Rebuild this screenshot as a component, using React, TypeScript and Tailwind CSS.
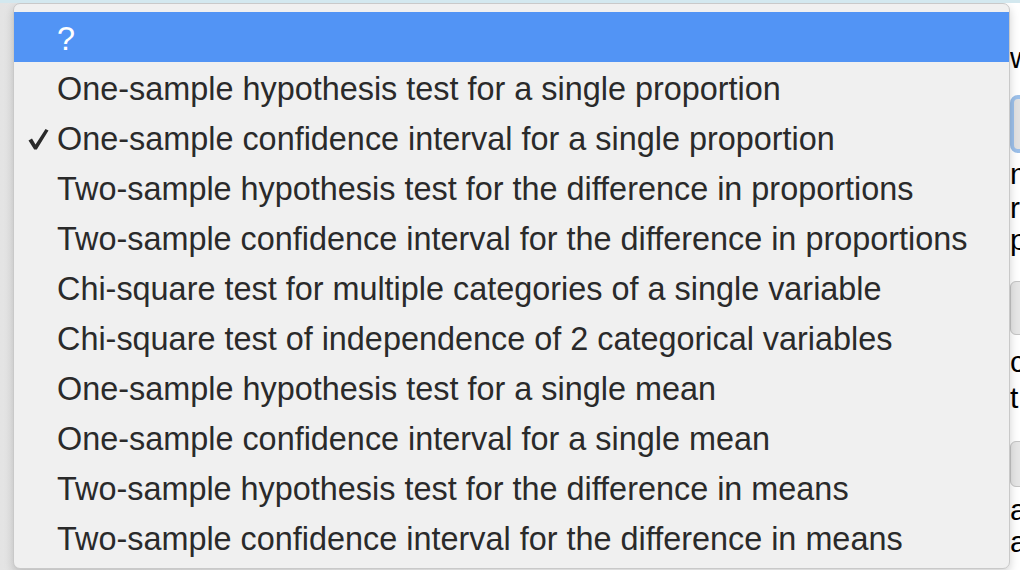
import { useState } from "react";

const options = [
  "?",
  "One-sample hypothesis test for a single proportion",
  "One-sample confidence interval for a single proportion",
  "Two-sample hypothesis test for the difference in proportions",
  "Two-sample confidence interval for the difference in proportions",
  "Chi-square test for multiple categories of a single variable",
  "Chi-square test of independence of 2 categorical variables",
  "One-sample hypothesis test for a single mean",
  "One-sample confidence interval for a single mean",
  "Two-sample hypothesis test for the difference in means",
  "Two-sample confidence interval for the difference in means",
];

const Check = () => (
  <svg width="22" height="24" viewBox="0 0 22 24" className="ml-[6px] mt-[3px]">
    <path d="M1.5 13.5 L5 11.5 L8.5 17.5 L18.5 2 L21.5 3.5 L9.8 22.5 L7.2 22.5 Z" fill="currentColor" />
  </svg>
);

const Backdrop = () => (
  <div className="flex w-[10px] flex-col overflow-hidden text-[30px] leading-none text-black">
    <div className="mt-[40px] h-[26px] whitespace-nowrap">w</div>
    <div className="mt-[26px] h-[58px] w-[40px] rounded-[8px] border-[4px] border-[#9cc0ea] bg-[#e2e2e2]" />
    <div className="mt-[6px] h-[26px] whitespace-nowrap">n</div>
    <div className="mt-[8px] h-[26px] whitespace-nowrap">r</div>
    <div className="mt-[6px] h-[26px] whitespace-nowrap">pl</div>
    <div className="mt-[30px] h-[54px] w-[40px] rounded-[6px] border border-[#c4c4c4] bg-[#e6e6e6]" />
    <div className="mt-[12px] h-[26px] whitespace-nowrap">c</div>
    <div className="mt-[10px] h-[26px] whitespace-nowrap">t</div>
    <div className="mt-[32px] h-[46px] w-[40px] rounded-[6px] border border-[#c4c4c4] bg-[#e6e6e6]" />
    <div className="mt-[8px] h-[26px] whitespace-nowrap">a</div>
    <div className="mt-[6px] h-[26px] whitespace-nowrap">a</div>
  </div>
);

export default function App() {
  const [checked] = useState(2);
  const [hover, setHover] = useState(0);

  return (
    <div
      className="flex h-[570px] w-[1020px] overflow-hidden border-t-[3px] border-[#d3e8ef] bg-gradient-to-r from-[#e4e4e4] via-white to-white"
      style={{ fontFamily: '"Liberation Sans", Arial, sans-serif' }}
    >
      <div className="w-[13px] shrink-0" />
      <div className="z-10 flex h-[566px] w-[997px] shrink-0 flex-col rounded-[7px] border border-[#c9c9c9] bg-[#f0f0f0] py-[8px] shadow-[0_4px_10px_rgba(0,0,0,0.18)]">
        {options.map((label, i) => (
          <div
            key={label}
            onMouseEnter={() => setHover(i)}
            className={`flex h-[50px] shrink-0 items-center text-[32.4px] ${
              hover === i ? "bg-[#5294f5] text-white" : "text-[#2a2a2a]"
            }`}
          >
            <span className="flex w-[43px] shrink-0 items-center pl-[7px]">
              {checked === i ? <Check /> : null}
            </span>
            <span className="whitespace-nowrap pt-[4px]">{label}</span>
          </div>
        ))}
      </div>
      <Backdrop />
    </div>
  );
}
